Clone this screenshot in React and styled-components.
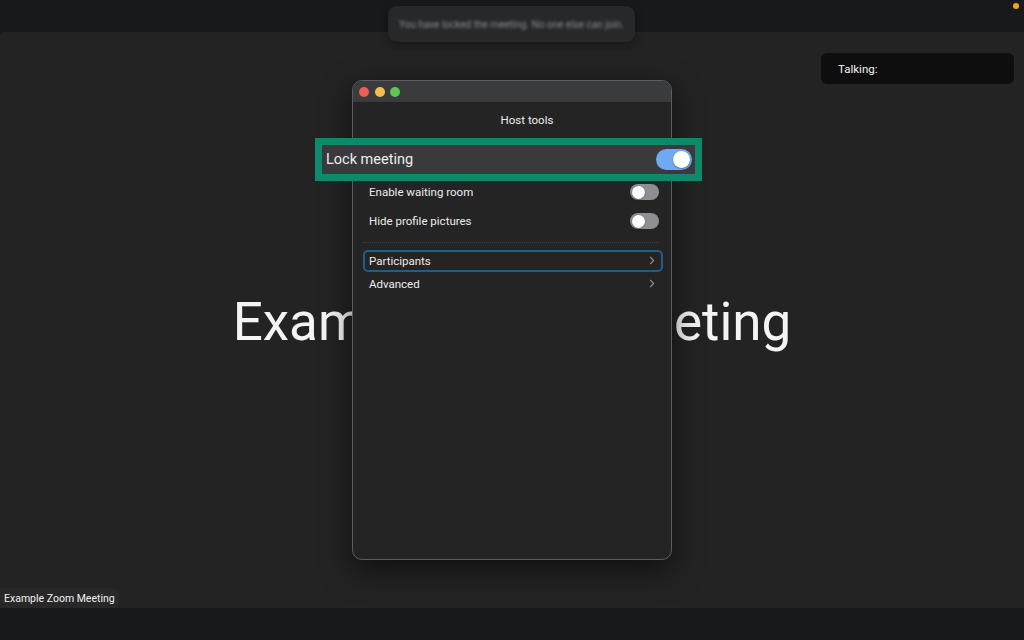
import styled, { createGlobalStyle } from "styled-components";

const GlobalStyle = createGlobalStyle`
  html, body {
    margin: 0;
    padding: 0;
    background: #18191b;
  }
  * {
    box-sizing: border-box;
  }
`;

const Screen = styled.div`
  width: 1024px;
  height: 640px;
  display: flex;
  flex-direction: column;
  background: #18191b;
  font-family: Roboto, "Liberation Sans", sans-serif;
  color: #f2f2f2;
  position: relative;
  overflow: hidden;
`;

const TopBar = styled.div`
  height: 32px;
  flex-shrink: 0;
`;

const BottomBar = styled.div`
  height: 32px;
  flex-shrink: 0;
`;

const Stage = styled.div`
  flex: 1;
  position: relative;
  background: #232323;
  border-radius: 4px 0 0 0;
  display: flex;
  align-items: center;
  justify-content: center;
`;

const MeetingTitle = styled.div`
  font-size: 53px;
  font-weight: 400;
  color: #f4f4f4;
  margin-top: 4px;
`;

const Toast = styled.div`
  position: absolute;
  top: 6px;
  left: 388px;
  width: 247px;
  height: 36px;
  border-radius: 9px;
  background: #26282a;
  box-shadow: 0 4px 10px rgba(0, 0, 0, 0.35);
  display: flex;
  align-items: center;
  justify-content: center;
`;

const ToastText = styled.span`
  font-size: 10px;
  color: #8a8d8f;
  filter: blur(1.4px);
  white-space: nowrap;
`;

const RecDot = styled.div`
  position: absolute;
  top: 3px;
  right: 5px;
  width: 6px;
  height: 6px;
  border-radius: 50%;
  background: #f6a21c;
`;

const TalkingBox = styled.div`
  position: absolute;
  top: 21px;
  right: 10px;
  width: 193px;
  height: 31px;
  border-radius: 6px;
  background: #0e0e0e;
  font-size: 11.5px;
  color: #f2f2f2;
  padding-left: 17px;
  display: flex;
  align-items: center;
`;

const NameTag = styled.div`
  position: absolute;
  left: 0;
  bottom: 0;
  padding: 4px 4px 3px 4px;
  border-radius: 0 8px 0 0;
  background: #282828;
  font-size: 10.5px;
  color: #f0f0f0;
`;

const Window = styled.div`
  position: absolute;
  top: 48px;
  left: 352px;
  width: 320px;
  height: 480px;
  border-radius: 10px;
  border: 1px solid #5c5c5c;
  background: #242424;
  box-shadow: 0 10px 30px rgba(0, 0, 0, 0.55);
  display: flex;
  flex-direction: column;
`;

const TitleBar = styled.div`
  height: 21px;
  flex-shrink: 0;
  background: #3a3b3c;
  border-radius: 9px 9px 0 0;
  display: flex;
  align-items: center;
  gap: 5.5px;
  padding-left: 6px;
`;

const Light = styled.span`
  width: 10px;
  height: 10px;
  border-radius: 50%;
  background: ${props => props.color};
`;

const Heading = styled.div`
  height: 36px;
  padding: 11px 0 0 30px;
  line-height: 14px;
  text-align: center;
  font-size: 11.5px;
  color: #ececec;
`;

const Content = styled.div`
  display: flex;
  flex-direction: column;
  padding: 0 12px 0 10px;
`;

const ToggleRow = styled.div`
  height: 29px;
  display: flex;
  align-items: center;
  justify-content: space-between;
  padding-left: 6px;
  font-size: 11.5px;
  color: #ececec;
`;

/* the emphasised row spills past the window edges with a thick green frame */
const HighlightRow = styled.div`
  height: 43px;
  margin: 0 -43px -3.5px -48px;
  border: 7px solid #10886a;
  background: #3a3a3c;
  display: flex;
  align-items: center;
  justify-content: space-between;
  padding: 0 3px 0 4px;
  font-size: 14.5px;
  color: #ececec;
  position: relative;
  z-index: 1;
`;

const Switch = styled.div`
  position: relative;
  width: ${props => props.big ? 36 : 29}px;
  height: ${props => props.big ? 21 : 16}px;
  border-radius: 11px;
  background: ${props => props.on ? "#6ea9f2" : "#8e8e93"};
  flex-shrink: 0;

  &::after {
    content: "";
    position: absolute;
    top: ${props => props.big ? 2 : 1.5}px;
    left: ${props => props.on ? "auto" : "1.5px"};
    right: ${props => props.on ? "2px" : "auto"};
    width: ${props => props.big ? 17 : 13}px;
    height: ${props => props.big ? 17 : 13}px;
    border-radius: 50%;
    background: #ffffff;
    box-shadow: 0 1px 2px rgba(0, 0, 0, 0.3);
  }
`;

const Separator = styled.div`
  height: 1px;
  margin: 6px 0 7px 0;
  border-top: 1px dotted #3e3e3e;
`;

const NavRow = styled.div`
  height: ${props => props.focused ? 22 : 24}px;
  margin-right: ${props => props.focused ? -4 : 0}px;
  display: flex;
  align-items: center;
  justify-content: space-between;
  padding: 0 ${props => props.focused ? 6 : 4}px 0 ${props => props.focused ? 4 : 6}px;
  border: ${props => props.focused ? "2px solid #1f5e8a" : "none"};
  border-radius: 5px;
  font-size: 11.5px;
  color: #ececec;
`;

const Chevron = () => (
  <svg width="6" height="9" viewBox="0 0 6 9">
    <path d="M1.2 1 L4.6 4.5 L1.2 8" fill="none" stroke="#8a8a8a" strokeWidth="1.2" />
  </svg>
);

export default function App() {
  return (
    <Screen>
      <GlobalStyle />
      <TopBar />
      <Stage>
        <MeetingTitle>Example Zoom Meeting</MeetingTitle>
        <TalkingBox>Talking:</TalkingBox>
        <NameTag>Example Zoom Meeting</NameTag>

        <Window>
          <TitleBar>
            <Light color="#ec5f57" />
            <Light color="#f4bd4f" />
            <Light color="#5fc553" />
          </TitleBar>
          <Heading>Host tools</Heading>
          <Content>
            <HighlightRow>
              Lock meeting
              <Switch on big />
            </HighlightRow>
            <ToggleRow>
              Enable waiting room
              <Switch />
            </ToggleRow>
            <ToggleRow>
              Hide profile pictures
              <Switch />
            </ToggleRow>
            <Separator />
            <NavRow focused>
              Participants
              <Chevron />
            </NavRow>
            <NavRow>
              Advanced
              <Chevron />
            </NavRow>
          </Content>
        </Window>
      </Stage>
      <BottomBar />

      <Toast>
        <ToastText>You have locked the meeting. No one else can join.</ToastText>
      </Toast>
      <RecDot />
    </Screen>
  );
}
